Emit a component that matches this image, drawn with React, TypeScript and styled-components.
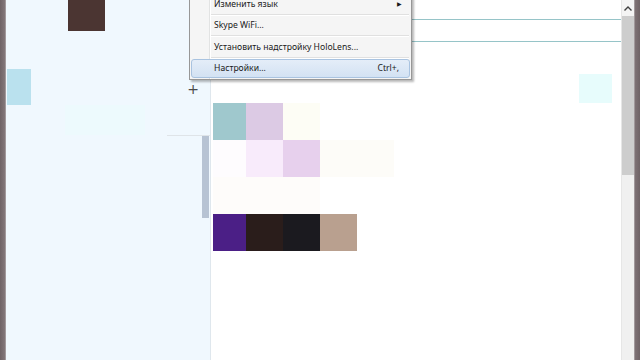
import styled, { createGlobalStyle } from 'styled-components';

const GlobalStyle = createGlobalStyle`
  html, body {
    margin: 0;
    padding: 0;
    overflow: hidden;
    background: #ffffff;
  }
`;

const Frame = styled.div`
  position: relative;
  width: 640px;
  height: 360px;
  display: flex;
  overflow: hidden;
  font-family: 'Noto Sans', 'Open Sans', sans-serif;
`;

const Edge = styled.div<{ $side: 'left' | 'right' }>`
  width: 6px;
  flex-shrink: 0;
  background: ${(p) =>
    p.$side === 'left'
      ? 'linear-gradient(90deg, #6f6366 0%, #83777a 80%, #b9b3b5 100%)'
      : 'linear-gradient(90deg, #b3adaf 0%, #7d7174 25%, #6f6366 100%)'};
`;

const Sidebar = styled.aside`
  width: 204px;
  flex-shrink: 0;
  background: #f0f8fe;
  border-right: 1px solid #dfe7ed;
  display: flex;
  flex-direction: column;
`;

const Block = styled.div<{ $w: number; $h: number; $bg: string }>`
  width: ${(p) => p.$w}px;
  height: ${(p) => p.$h}px;
  background: ${(p) => p.$bg};
  flex-shrink: 0;
`;

const SideTop = styled.div`
  padding-left: 62px;
`;

const SideRow = styled.div`
  margin-top: 38px;
  padding-left: 1px;
  display: flex;
  align-items: flex-start;
`;

const Plus = styled.span`
  margin-left: auto;
  margin-right: 11px;
  margin-top: 13px;
  font-size: 14px;
  line-height: 14px;
  color: #4a4a4a;
  font-family: 'DejaVu Sans', sans-serif;
`;

const FaintPanel = styled.div`
  margin: 0 0 0 59px;
  width: 80px;
  height: 30px;
  background: #edfafd;
`;

const SideRule = styled.div`
  align-self: flex-end;
  width: 43px;
  height: 1px;
  background: #dfe4e8;
`;

const SideThumb = styled.div`
  align-self: flex-end;
  width: 7px;
  height: 82px;
  margin-right: 1px;
  background: #b7c3d3;
`;

const Main = styled.main`
  flex: 1;
  background: #ffffff;
  display: flex;
  flex-direction: column;
`;

const InputBox = styled.div`
  margin-top: 19px;
  height: 21px;
  border-top: 1px solid #96c4c8;
  border-bottom: 1px solid #96c4c8;
`;

const CyanBlock = styled.div`
  align-self: flex-end;
  margin: 32px 9px 0 0;
  width: 33px;
  height: 29px;
  background: #e7fcfc;
`;

const Mosaic = styled.div`
  margin-left: 2px;
  display: grid;
  grid-template-columns: 33px repeat(4, 37px);
  grid-auto-rows: 37px;
`;

const Cell = styled.div<{ $bg: string }>`
  background: ${(p) => p.$bg};
`;

const Scrollbar = styled.div`
  width: 12px;
  flex-shrink: 0;
  background: #f0f0f0;
  border-left: 1px solid #e6e6e6;
  display: flex;
  flex-direction: column;
`;

const ScrollButton = styled.div`
  height: 16px;
  display: flex;
  align-items: center;
  justify-content: center;
  background: #f4f4f4;
`;

const ScrollThumb = styled.div`
  height: 159px;
  background: #cdcdcd;
`;

const Menu = styled.div`
  position: absolute;
  left: 189px;
  top: -8px;
  width: 221px;
  background: #f5f5f5;
  border: 1px solid #979797;
  box-shadow: 2px 2px 2px rgba(0, 0, 0, 0.28);
  padding: 1px 0 1px;
  font-size: 8.6px;
  color: #1a1a1a;
`;

const Gutter = styled.div`
  position: absolute;
  left: 19px;
  top: 0;
  bottom: 0;
  width: 1px;
  background: #e2e3e3;
  border-right: 1px solid #ffffff;
`;

const MenuItem = styled.div<{ $active?: boolean }>`
  position: relative;
  height: 17.5px;
  margin: 0 1px;
  padding: 0 10px 0 22px;
  display: flex;
  align-items: center;
  border: 1px solid ${(p) => (p.$active ? '#a9c3e0' : 'transparent')};
  border-radius: 3px;
  background: ${(p) => (p.$active ? 'linear-gradient(180deg, #e4edf8 0%, #d3e2f3 100%)' : 'transparent')};
`;

const Shortcut = styled.span`
  margin-left: auto;
`;

const Arrow = styled.span`
  margin-left: auto;
  font-size: 6px;
  margin-right: -3px;
`;

const MenuSep = styled.div`
  height: 1px;
  margin: 0 2px 0 21px;
  background: #e0e0e0;
  border-bottom: 1px solid #ffffff;
`;

const rows = [
  ['#9fc8cd', '#dccae4', '#fdfdf5', '#ffffff', '#ffffff'],
  ['#fefcfe', '#f8ebfb', '#e7d0ed', '#fdfcf8', '#fdfcf8'],
  ['#fefcfa', '#fefcfa', '#fefcfa', '#ffffff', '#ffffff'],
  ['#4b1f86', '#2a1d1b', '#1b1a1f', '#b9a08f', '#ffffff'],
];

export default function App() {
  return (
    <>
      <GlobalStyle />
      <Frame>
        <Edge $side="left" />
        <Sidebar>
          <SideTop>
            <Block $w={37} $h={31} $bg="#4b3532" />
          </SideTop>
          <SideRow>
            <Block $w={24} $h={36} $bg="#bae1ee" />
            <Plus>+</Plus>
          </SideRow>
          <FaintPanel />
          <SideRule />
          <SideThumb />
        </Sidebar>
        <Main>
          <InputBox />
          <CyanBlock />
          <Mosaic>
            {rows.flat().map((c, i) => (
              <Cell key={i} $bg={c} />
            ))}
          </Mosaic>
        </Main>
        <Scrollbar>
          <ScrollButton>
            <svg width="8" height="5" viewBox="0 0 8 5">
              <path d="M0.5 4.5 L4 1 L7.5 4.5" fill="none" stroke="#404040" strokeWidth="1.4" />
            </svg>
          </ScrollButton>
          <ScrollThumb />
        </Scrollbar>
        <Edge $side="right" />
        <Menu>
          <Gutter />
          <MenuItem>
            Изменить язык
            <Arrow>▶</Arrow>
          </MenuItem>
          <MenuSep />
          <MenuItem>Skype WiFi...</MenuItem>
          <MenuSep />
          <MenuItem>Установить надстройку HoloLens...</MenuItem>
          <MenuSep />
          <MenuItem $active>
            Настройки...
            <Shortcut>Ctrl+,</Shortcut>
          </MenuItem>
        </Menu>
      </Frame>
    </>
  );
}
